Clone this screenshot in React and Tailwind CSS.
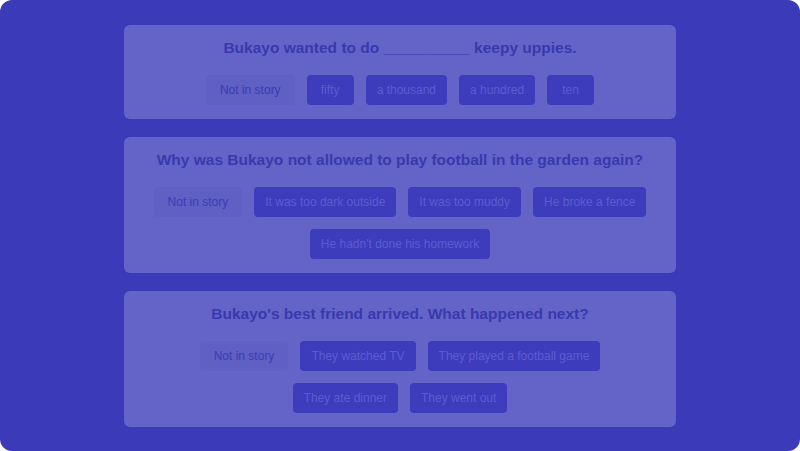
import React from 'react';

const questions = [
  {
    title: 'Bukayo wanted to do __________ keepy uppies.',
    options: ['fifty', 'a thousand', 'a hundred', 'ten'],
  },
  {
    title: 'Why was Bukayo not allowed to play football in the garden again?',
    options: ['It was too dark outside', 'It was too muddy', 'He broke a fence', "He hadn't done his homework"],
  },
  {
    title: "Bukayo's best friend arrived. What happened next?",
    options: ['They watched TV', 'They played a football game', 'They ate dinner', 'They went out'],
  },
];

const QuestionCard = ({ title, options }) => (
  <div className="w-[552px] rounded-md bg-[#6464c8] px-4 pt-[12px] pb-[14px]">
    <h2 className="text-center text-[15.5px] font-bold leading-[22px] text-[#3939ae]">{title}</h2>
    <div className="mt-[16px] flex flex-wrap justify-center gap-3 px-3">
      <button className="h-[30px] rounded bg-[#5f5fc4] px-[14px] text-[12px] text-[#3c3cb4]">
        Not in story
      </button>
      {options.map((opt) => (
        <button key={opt} className="h-[30px] min-w-[47px] rounded bg-[#3c3cbc] px-[11px] text-[12px] text-[#5c5cd0]">
          {opt}
        </button>
      ))}
    </div>
  </div>
);

export default function App() {
  return (
    <div className="h-[451px] w-[800px] bg-white" style={{ fontFamily: '"Liberation Sans", Arial, sans-serif' }}>
      <div className="flex h-full w-full flex-col items-center justify-center gap-[18px] rounded-xl bg-[#3b3bb9]">
        {questions.map((q) => (
          <QuestionCard key={q.title} title={q.title} options={q.options} />
        ))}
      </div>
    </div>
  );
}
